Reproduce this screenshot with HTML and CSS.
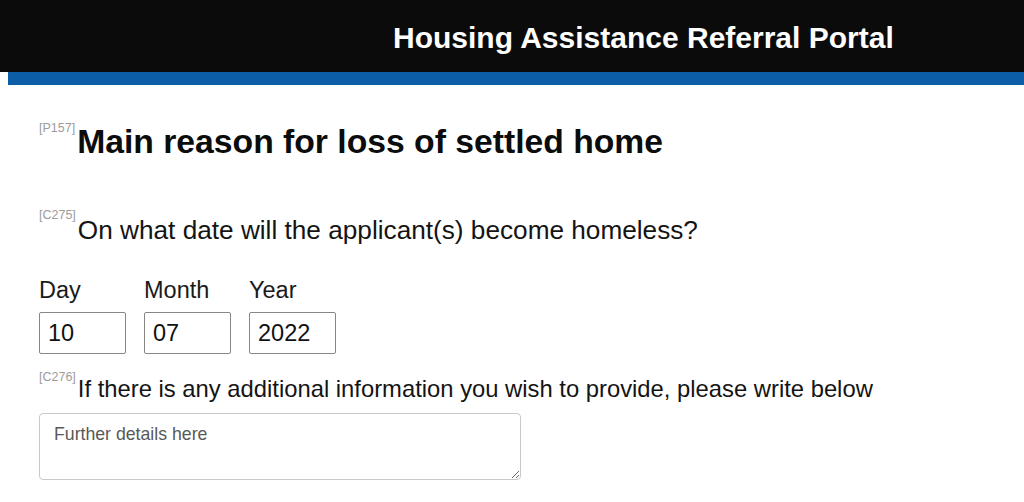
FILE: index.html
```html
<!DOCTYPE html>
<html lang="en">
<head>
  <meta charset="UTF-8">
  <title>Housing Assistance Referral Portal</title>
  <link rel="stylesheet" href="styles.css">
</head>
<body>

  <header class="topbar">
    <div class="topbar-title">Housing Assistance Referral Portal</div>
  </header>
  <div class="topbar-stripe"></div>

  <main class="page">
    <div class="heading-row">
      <span class="ref">[P157]</span>
      <h1 class="page-title">Main reason for loss of settled home</h1>
    </div>

    <div class="question-row q-date">
      <span class="ref">[C275]</span>
      <span class="question q-large">On what date will the applicant(s) become homeless?</span>
    </div>

    <div class="date-fields">
      <div class="date-field">
        <label for="day">Day</label>
        <input id="day" type="text" value="10">
      </div>
      <div class="date-field">
        <label for="month">Month</label>
        <input id="month" type="text" value="07">
      </div>
      <div class="date-field">
        <label for="year">Year</label>
        <input id="year" type="text" value="2022">
      </div>
    </div>

    <div class="question-row q-info">
      <span class="ref">[C276]</span>
      <label class="question" for="details">If there is any additional information you wish to provide, please write below</label>
    </div>
    <textarea id="details" class="details" placeholder="Further details here"></textarea>
  </main>

</body>
</html>
```

FILE: styles.css
```css
body {
  margin: 0;
  font-family: "Liberation Sans", Arial, sans-serif;
  background-color: #ffffff;
  color: #111111;
}

/* barra do topo */
.topbar {
  height: 72px;
  box-sizing: border-box;
  padding: 4px 0 0 393px;
  background-color: #0b0b0b;
  display: flex;
  align-items: center;
}

.topbar-title {
  color: #ffffff;
  font-size: 30px;
  font-weight: bold;
  line-height: 34px;
}

.topbar-stripe {
  height: 13px;
  margin-left: 8px;
  background-color: #0c5fa7;
}

.page {
  padding: 0 0 40px 39px;
}

.heading-row,
.question-row {
  display: flex;
  align-items: flex-start;
}

.heading-row {
  margin-top: 36px;
}

.ref {
  font-size: 12.5px;
  line-height: 14px;
  color: #9c9c9c;
  margin-right: 2px;
}

.page-title {
  margin: 0;
  font-size: 33.7px;
  line-height: 40px;
  font-weight: bold;
  color: #0b0c0c;
}

.question {
  font-size: 23.8px;
  line-height: 28px;
  color: #141414;
  margin-top: 5px;
}

.q-large {
  font-size: 26.2px;
  line-height: 30px;
  margin-top: 7px;
}

.q-date {
  margin-top: 47px;
}

.date-fields {
  display: flex;
  gap: 18px;
  margin-top: 32px;
}

.date-field {
  display: flex;
  flex-direction: column;
  gap: 8px;
}

.date-field label {
  font-size: 23.5px;
  line-height: 27px;
  color: #1a1a1a;
}

.date-field input {
  width: 87px;
  height: 42px;
  box-sizing: border-box;
  margin: 0;
  padding: 0 8px;
  border: 1px solid #878787;
  border-radius: 2px;
  font-family: "Liberation Sans", Arial, sans-serif;
  font-size: 23.5px;
  color: #111111;
  background-color: #ffffff;
}

.q-info {
  margin-top: 16px;
}

.details {
  display: block;
  width: 482px;
  height: 67px;
  box-sizing: border-box;
  margin: 10px 0 0 0;
  padding: 10px 14px;
  border: 1px solid #c9c9c9;
  border-radius: 4px;
  font-family: "Liberation Sans", Arial, sans-serif;
  font-size: 17.7px;
  color: #111111;
}

.details::placeholder {
  color: #595959;
}
```
